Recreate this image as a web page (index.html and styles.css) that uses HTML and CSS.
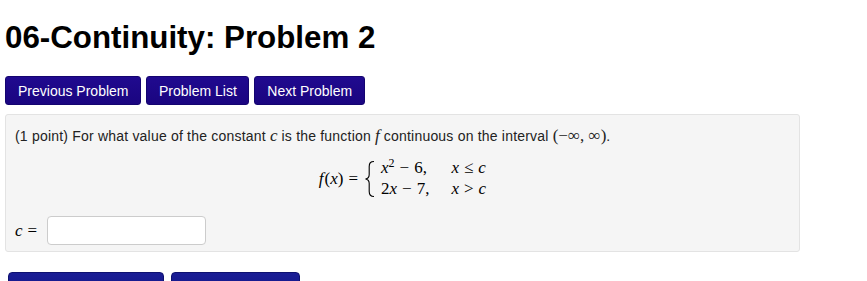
FILE: index.html
```html
<!DOCTYPE html>
<html>
<head>
<meta charset="utf-8">
<link rel="stylesheet" href="styles.css">
</head>
<body>
<div class="page">
  <h1 class="title">06-Continuity: Problem 2</h1>
  <div class="nav">
    <a class="btn">Previous Problem</a>
    <a class="btn">Problem List</a>
    <a class="btn">Next Problem</a>
  </div>
  <div class="problem">
    <p class="statement">(1 point) For what value of the constant <span class="mi">c</span> is the function <span class="mi">f</span> continuous on the interval <span class="mn">(−∞, ∞)</span>.</p>
    <div class="display">
      <div class="lhs"><span class="mi">f</span><span class="mn">(</span><span class="mi">x</span><span class="mn">)</span><span class="mo">=</span></div>
      <svg class="brace" width="12" height="38" viewBox="0 0 12 38"><path d="M10 1.5 C6.5 1.5 5.2 3 5.2 6.5 L5.2 14.5 C5.2 17.5 4 18.6 1.5 19 C4 19.4 5.2 20.5 5.2 23.5 L5.2 31.5 C5.2 35 6.5 36.5 10 36.5" fill="none" stroke="#000" stroke-width="1.1"/></svg>
      <div class="cases">
        <span class="cell"><span class="mi">x</span><sup class="mn">2</sup><span class="op">−</span><span class="mn">6,</span></span>
        <span class="cell"><span class="mi">x</span><span class="op">≤</span><span class="mi">c</span></span>
        <span class="cell"><span class="mn">2</span><span class="mi">x</span><span class="op">−</span><span class="mn">7,</span></span>
        <span class="cell"><span class="mi">x</span><span class="op">&gt;</span><span class="mi">c</span></span>
      </div>
    </div>
    <div class="answer">
      <span class="label"><span class="mi">c</span><span class="mo">=</span></span>
      <input class="field" type="text">
    </div>
  </div>
  <div class="actions">
    <a class="btn2"></a>
    <a class="btn2 short"></a>
  </div>
</div>
</body>
</html>
```

FILE: styles.css
```css
html, body {
  margin: 0;
  padding: 0;
  background: #fff;
}
body {
  font-family: "Liberation Sans", Arial, sans-serif;
  font-size: 14px;
  color: #222;
}
.page {
  padding: 0 67px 0 5px;
}
.title {
  margin: 0;
  padding-top: 21px;
  font-size: 31.3px;
  line-height: 34px;
  font-weight: bold;
  color: #000;
}
.nav {
  display: flex;
  gap: 5px;
  margin-top: 21px;
}
.btn {
  display: block;
  height: 29px;
  box-sizing: border-box;
  padding: 0 11.5px 0 12px;
  line-height: 28px;
  color: #fff;
  font-size: 14px;
  background: linear-gradient(#200a8f, #1a0580);
  border: 1px solid #140470;
  border-radius: 3px;
}
.problem {
  margin-top: 9px;
  box-sizing: border-box;
  height: 138px;
  background: #f5f5f5;
  border: 1px solid #e3e3e3;
  border-radius: 3px;
  padding: 11px 9px 0 9px;
}
.statement {
  margin: 0;
  line-height: 20px;
  color: #222;
  letter-spacing: 0.2px;
}
.mi {
  font-family: "Liberation Serif", "Times New Roman", serif;
  font-style: italic;
  font-size: 17px;
  letter-spacing: 0;
}
.mn, .mo, .op {
  font-family: "Liberation Serif", "Times New Roman", serif;
  font-style: normal;
  font-size: 17px;
  letter-spacing: 0;
}
.display {
  display: flex;
  justify-content: center;
  align-items: center;
  margin-top: 12px;
  color: #000;
}
.lhs .mi:first-child {
  margin-right: 1px;
}
.lhs .mo {
  margin-left: 5px;
  margin-right: 6px;
}
.brace {
  display: block;
  margin-right: 5px;
}
.cases {
  display: grid;
  grid-template-columns: auto auto;
  column-gap: 22px;
  row-gap: 0;
}
.cell {
  line-height: 19px;
  white-space: nowrap;
}
.cell sup {
  font-size: 12px;
  vertical-align: 0;
  position: relative;
  top: -6px;
}
.op {
  margin: 0 5px;
}
.answer {
  display: flex;
  align-items: center;
  margin-top: 17px;
  color: #000;
}
.label .mo {
  margin-left: 5px;
}
.field {
  margin: 0 0 0 10px;
  width: 159px;
  height: 29px;
  box-sizing: border-box;
  border: 1px solid #ccc;
  border-radius: 4px;
  background: #fff;
  padding: 4px 6px;
}
.actions {
  display: flex;
  gap: 7px;
  margin-top: 20px;
  padding-left: 3px;
}
.btn2 {
  display: block;
  width: 156px;
  height: 30px;
  background: linear-gradient(#1a1d95, #121685);
  border: 1px solid #0e1170;
  box-sizing: border-box;
  border-radius: 4px;
}
.btn2.short {
  width: 129px;
}
```
